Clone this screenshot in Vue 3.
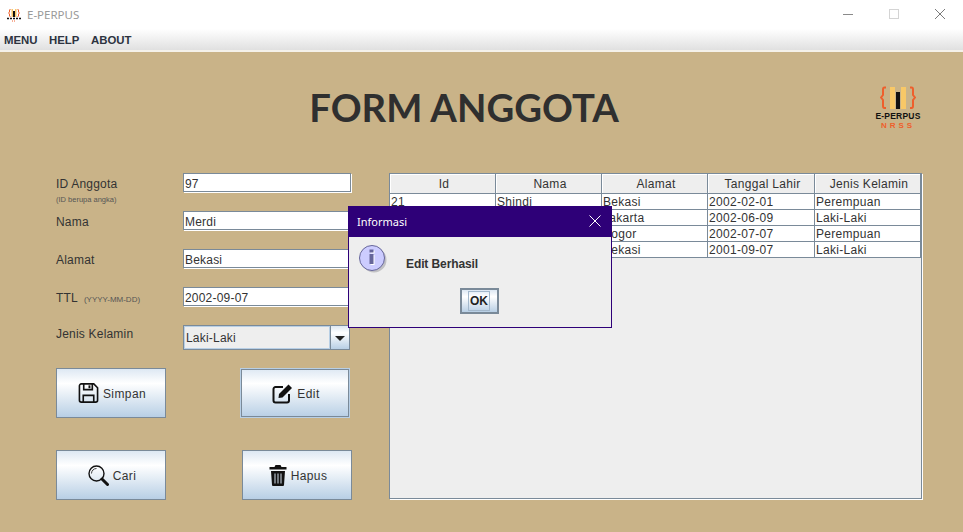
<script setup>
const fields = [
  { label: 'ID Anggota', note: '(ID berupa angka)', value: '97' },
  { label: 'Nama', value: 'Merdi' },
  { label: 'Alamat', value: 'Bekasi' },
  { label: 'TTL', inlineNote: '(YYYY-MM-DD)', value: '2002-09-07' },
]
const columns = ['Id', 'Nama', 'Alamat', 'Tanggal Lahir', 'Jenis Kelamin']
const rows = [
  ['21', 'Shindi', 'Bekasi', '2002-02-01', 'Perempuan'],
  ['', '', 'Jakarta', '2002-06-09', 'Laki-Laki'],
  ['', '', 'Bogor', '2002-07-07', 'Perempuan'],
  ['', '', 'Bekasi', '2001-09-07', 'Laki-Laki'],
]
</script>

<template>
  <div class="window">
    <header class="titlebar">
      <svg class="app-icon" viewBox="0 0 16 14" width="16" height="14">
        <path d="M4.500 1 3.500 2v2L2.500 5l1 1v2l1 1" fill="none" stroke="#ee5f2c" stroke-width="1" />
        <path d="M11.500 1l1 1v2l1 1-1 1v2l-1 1" fill="none" stroke="#ee5f2c" stroke-width="1" />
        <rect x="5.500" y="1" width="1.500" height="8" fill="#f8c867" />
        <rect x="9" y="1" width="1.500" height="8" fill="#f8c867" />
        <rect x="7" y="3" width="2" height="6" fill="#111" />
        <path d="M1 10.500h14" stroke="#111" stroke-width="1.500" stroke-dasharray="2 1" />
        <path d="M6 13h4" stroke="#ee5f2c" stroke-width="1" stroke-dasharray="1 1" />
      </svg>
      <span class="app-name">E-PERPUS</span>
      <div class="controls">
        <svg width="12" height="12" viewBox="0 0 12 12"><path d="M1 6.500h10" stroke="#8a8a8a" /></svg>
        <svg width="12" height="12" viewBox="0 0 12 12"><rect x="1.500" y="1.500" width="9" height="9" fill="none" stroke="#d4d4d4" /></svg>
        <svg width="12" height="12" viewBox="0 0 12 12"><path d="M1 1l10 10M11 1 1 11" stroke="#7a7a7a" /></svg>
      </div>
    </header>

    <nav class="menubar">
      <span>MENU</span><span>HELP</span><span>ABOUT</span>
    </nav>

    <main class="body">
      <section class="heading">
        <h1>FORM ANGGOTA</h1>
        <div class="logo">
          <svg viewBox="0 0 36 24" width="36" height="24">
            <path d="M6 1.500H4.500Q3 1.500 3 3.500v5.500L1 11.500 3 14v6q0 2 1.500 2H6" fill="none" stroke="#ee5f2c" stroke-width="2" />
            <path d="M30 1.500h1.500Q33 1.500 33 3.500v5.500l2 2.500L33 14v6q0 2-1.500 2H30" fill="none" stroke="#ee5f2c" stroke-width="2" />
            <rect x="10" y="1" width="5" height="22" fill="#f8c867" />
            <rect x="21" y="1" width="5" height="22" fill="#f8c867" />
            <rect x="16" y="6" width="4" height="17" fill="#111" />
          </svg>
          <b class="logo-name">E-PERPUS</b>
          <b class="logo-sub">NRSS</b>
        </div>
      </section>

      <section class="content">
        <div class="form">
          <div class="fields">
            <template v-for="f in fields" :key="f.label">
              <div class="label">
                {{ f.label }}<small v-if="f.inlineNote" class="inline-note">{{ f.inlineNote }}</small>
                <small v-if="f.note" class="note">{{ f.note }}</small>
              </div>
              <input class="input" :value="f.value" readonly />
            </template>
            <div class="label combo-label">Jenis Kelamin</div>
            <div class="combo">
              <span class="combo-value">Laki-Laki</span>
              <span class="combo-arrow"><i></i></span>
            </div>
          </div>

          <div class="actions">
            <button class="btn">
              <svg width="21" height="22" viewBox="0 0 22 22" fill="none" stroke="#111" stroke-width="1.700">
                <path d="M3.500 1.500h13l4 4v13a2 2 0 0 1-2 2h-15a2 2 0 0 1-2-2v-15a2 2 0 0 1 2-2z" />
                <path d="M6 1.500v6h9v-6M5.500 20.500v-7h11v7" />
                <path d="M12 3v3" stroke-width="2" />
              </svg>
              <span class="btn-text">Simpan</span>
            </button>
            <button class="btn btn-focus">
              <svg width="21" height="21" viewBox="0 0 21 21">
                <path d="M11 4H3.500a2 2 0 0 0-2 2v11.500a2 2 0 0 0 2 2H15a2 2 0 0 0 2-2V11" fill="none" stroke="#111" stroke-width="2" />
                <path d="M7 11 16.500 1.500 20 5l-9.500 9.500L6.500 15z" fill="#111" />
              </svg>
              <span class="btn-text">Edit</span>
            </button>
            <button class="btn">
              <svg width="21" height="21" viewBox="0 0 21 21" fill="none" stroke="#111">
                <circle cx="8.500" cy="8.500" r="7.500" stroke-width="1.400" />
                <path d="M3.500 8.500a5 5 0 0 1 5-5" stroke-width="0.800" />
                <path d="M14 14l5.500 5.500" stroke-width="3" stroke-linecap="round" />
              </svg>
              <span class="btn-text">Cari</span>
            </button>
            <button class="btn btn-shift">
              <svg width="18" height="22" viewBox="0 0 18 22">
                <path d="M6.500 1h5l1 2H17.500v2.500H.5V3H5.500z" fill="#111" />
                <path d="M2 7h14l-1 14a1 1 0 0 1-1 1H4a1 1 0 0 1-1-1z" fill="#111" />
                <path d="M6 9.500v10M9 9.500v10M12 9.500v10" stroke="#d4e0ec" stroke-width="1" />
              </svg>
              <span class="btn-text">Hapus</span>
            </button>
          </div>
        </div>

        <div class="table-pane">
          <table class="grid">
            <thead>
              <tr><th v-for="c in columns" :key="c">{{ c }}</th></tr>
            </thead>
            <tbody>
              <tr v-for="(r, i) in rows" :key="i">
                <td v-for="(v, j) in r" :key="j">{{ v }}</td>
              </tr>
            </tbody>
          </table>
        </div>
      </section>
    </main>

    <div class="dialog">
      <div class="dialog-title">
        <span>Informasi</span>
        <svg width="12" height="12" viewBox="0 0 12 12"><path d="M.5.500l11 11M11.500.500l-11 11" stroke="#fff" /></svg>
      </div>
      <div class="dialog-body">
        <div class="dialog-msg">
          <svg class="info" width="30" height="32" viewBox="0 0 30 32">
            <circle cx="15" cy="16" r="12.500" fill="#8a8a90" opacity="0.450" />
            <circle cx="13" cy="14" r="12.500" fill="#ccccff" stroke="#66669a" stroke-width="1" />
            <rect x="11.500" y="6.500" width="4" height="3" fill="#fff" />
            <rect x="11.500" y="11" width="4" height="10" fill="#fff" />
            <rect x="10.500" y="5.500" width="4" height="3" fill="#66669a" />
            <rect x="10.500" y="10" width="4" height="10" fill="#66669a" />
          </svg>
          <b>Edit Berhasil</b>
        </div>
        <button class="ok"><span>OK</span></button>
      </div>
    </div>
  </div>
</template>

<style>
html, body { margin: 0; background: #c9b388; }
</style>

<style scoped>
.window {
  position: relative;
  width: 963px;
  height: 532px;
  overflow: hidden;
  font-family: "Liberation Sans", Arial, sans-serif;
  font-size: 12px;
  color: #333;
  background: #c9b388;
}
.titlebar {
  height: 29px;
  display: flex;
  align-items: center;
  background: #fff;
  padding-left: 6px;
}
.app-icon { margin-right: 5px; }
.app-name {
  font-family: "Noto Sans", sans-serif;
  font-size: 11.500px;
  color: #9a9a9a;
}
.controls {
  margin-left: auto;
  display: flex;
  gap: 34px;
  padding-right: 17px;
  margin-top: -2px;
}
.menubar {
  height: 21px;
  display: flex;
  align-items: center;
  gap: 11.500px;
  padding-left: 4px;
  font-weight: 700;
  font-size: 11.400px;
  color: #2d3340;
  background: linear-gradient(#fff, #e0e0e0);
  border-bottom: 2px solid #f4f1ea;
}
.body {
  height: 480px;
}
.heading {
  position: relative;
  height: 121px;
  display: flex;
  justify-content: center;
}
h1 {
  margin: 31px 0 0;
  padding-right: 35px;
  font-family: Lato, sans-serif;
  font-weight: 700;
  font-size: 38.250px;
  line-height: 48px;
  color: #2f2f2f;
}
.logo {
  position: absolute;
  left: 868px;
  top: 34px;
  width: 60px;
  display: flex;
  flex-direction: column;
  align-items: center;
}
.logo-name {
  font-size: 8.500px;
  line-height: 10px;
  margin-top: 1px;
  color: #111;
  letter-spacing: 0.200px;
}
.logo-sub {
  font-size: 8px;
  line-height: 10px;
  color: #ee5f2c;
  letter-spacing: 3px;
}
.content {
  display: flex;
  padding-left: 56px;
}
.form { width: 296px; }
.fields {
  display: grid;
  grid-template-columns: 127px 169px;
  grid-auto-rows: 19px;
  row-gap: 19px;
}
.label {
  font-size: 12px;
  line-height: 22px;
  letter-spacing: 0.200px;
  color: #333;
}
.note {
  display: block;
  font-size: 7.500px;
  line-height: 8px;
  margin-top: 1px;
  letter-spacing: 0;
  color: #555;
}
.inline-note {
  font-size: 8px;
  margin-left: 6px;
  letter-spacing: 0;
  color: #555;
}
.input {
  box-sizing: border-box;
  width: 168px;
  height: 19px;
  padding: 2px 1px 0;
  margin: 0;
  border: 1px solid #7a8a99;
  outline: none;
  box-shadow: 1px 1px 0 #fff;
  background: #fff;
  font: 12px "Liberation Sans", Arial, sans-serif;
  letter-spacing: 0.200px;
  color: #333;
}
.combo-label { line-height: 18px; }
.combo {
  box-sizing: border-box;
  display: flex;
  width: 167px;
  height: 25px;
  border: 1px solid #7a8a99;
  background: #eee;
}
.combo-value {
  flex: 1;
  padding-left: 2px;
  line-height: 25px;
  letter-spacing: 0.200px;
  box-shadow: inset 0 0 0 1px #b8cfe5;
}
.combo-arrow {
  width: 18px;
  display: flex;
  align-items: center;
  justify-content: center;
  border-left: 1px solid #7a8a99;
  background: linear-gradient(#dde8f3, #fff 30%, #b8cfe5);
}
.combo-arrow i {
  width: 0;
  height: 0;
  border: 5px solid transparent;
  border-top: 5px solid #222;
  border-bottom: 0;
  margin-top: 1px;
}
.actions {
  display: grid;
  grid-template-columns: 110px 110px;
  justify-content: start;
  column-gap: 74px;
  row-gap: 32px;
  margin-top: 24px;
}
.btn {
  box-sizing: border-box;
  width: 110px;
  height: 50px;
  display: flex;
  align-items: center;
  justify-content: center;
  gap: 4px;
  padding: 0 0 0 2px;
  border: 1px solid #7a8a99;
  background: linear-gradient(#dde8f3, #fff 30%, #b8cfe5);
  font: 12px "Liberation Sans", Arial, sans-serif;
  letter-spacing: 0.400px;
  color: #333;
}
.btn-text { margin-top: 2px; }
.btn-focus {
  border-color: #b8cfe5;
  box-shadow: inset 0 0 0 1px #7a8a99;
}
.btn-shift { margin-left: 2px; }
.table-pane {
  box-sizing: border-box;
  width: 533px;
  height: 326px;
  margin-left: 37px;
  border: 1px solid #7a8a99;
  box-shadow: 1px 1px 0 #fff;
  background: #eee;
}
.grid {
  border-collapse: separate;
  border-spacing: 0;
  table-layout: fixed;
  width: 531px;
  font-size: 12px;
  letter-spacing: 0.300px;
  color: #333;
}
th, td {
  box-sizing: border-box;
  padding: 0 1px;
  border-right: 1px solid #7a8a99;
  border-bottom: 1px solid #7a8a99;
  overflow: hidden;
  white-space: nowrap;
}
th:nth-child(1), td:nth-child(1) { width: 106px; }
th:nth-child(2), td:nth-child(2) { width: 106px; }
th:nth-child(3), td:nth-child(3) { width: 106px; }
th:nth-child(4), td:nth-child(4) { width: 107px; }
th:nth-child(5), td:nth-child(5) { width: 106px; }
th {
  height: 20px;
  padding: 0 0 0 3px;
  font-weight: 400;
  background: #eee;
  text-align: center;
  box-shadow: inset 1px 1px 0 #fff;
}
td {
  height: 16px;
  padding-top: 1px;
  line-height: 14px;
  background: #fff;
}
.dialog {
  position: absolute;
  left: 348px;
  top: 206px;
  box-sizing: border-box;
  width: 264px;
  height: 122px;
  border: 1px solid #2e0078;
  background: #eee;
}
.dialog-title {
  height: 30px;
  display: flex;
  align-items: center;
  justify-content: space-between;
  padding: 0 10px 2px 8px;
  box-sizing: border-box;
  background: #2e0078;
  color: #fff;
  font-family: "Noto Sans", sans-serif;
  font-size: 11px;
}
.dialog-body {
  display: flex;
  flex-direction: column;
  align-items: center;
}
.dialog-msg {
  align-self: flex-start;
  display: flex;
  align-items: center;
  width: 100%;
  height: 50px;
  padding-left: 10px;
  box-sizing: border-box;
}
.dialog-msg b {
  margin-left: 17px;
  margin-top: 3px;
  font-size: 12px;
  letter-spacing: -0.100px;
}
.info { margin-top: -4px; }
.ok {
  box-sizing: border-box;
  width: 39px;
  height: 26px;
  padding: 0;
  margin-top: 1px;
  margin-right: 2px;
  border: 2px solid #7a8a99;
  background: linear-gradient(#dde8f3, #fff 30%, #b8cfe5);
  font: 700 12px "Liberation Sans", Arial, sans-serif;
  color: #222;
  display: flex;
  align-items: center;
  justify-content: center;
}
.ok span {
  border: 1px solid #a3b8cc;
  padding: 2px 1px;
}
</style>
